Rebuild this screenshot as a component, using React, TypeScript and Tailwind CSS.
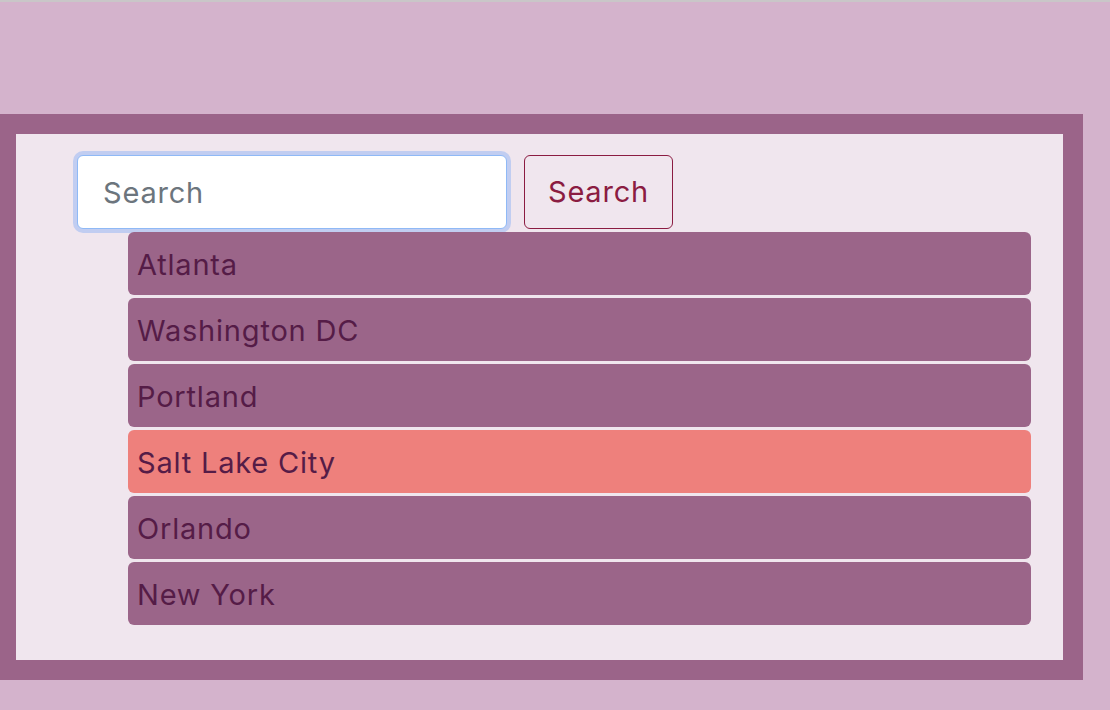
import React from "react";

const cities = ["Atlanta", "Washington DC", "Portland", "Salt Lake City", "Orlando", "New York"];

export default function App() {
    const active = "Salt Lake City";

    return (
        <div
            className="w-[1110px] h-[710px] bg-[#d4b3cc] border-t-2 border-[#c9c6c8] overflow-hidden"
            style={{ fontFamily: "Inter, 'Noto Sans', sans-serif" }}
        >
            <div className="h-[112px]" />
            {/* main box */}
            <div className="w-[1083px] border-[#9b6489] border-l-[16px] border-t-[20px] border-r-[20px] border-b-[20px] bg-[#f0e6ee] pt-[21px] pb-[35px]">
                <div className="flex items-start gap-[17px] pl-[61px]">
                    <input
                        placeholder="Search"
                        className="w-[430px] h-[74px] bg-white rounded-[6px] border border-[#8fb9f6] ring-4 ring-[#c1cdf1] px-[25px] text-[29px] tracking-[0.8px] text-[#212529] placeholder:text-[#6c757d] outline-none"
                    />
                    <button className="w-[149px] h-[74px] rounded-[6px] border border-[#8b1c42] text-[#8b1c42] text-[29px] tracking-[0.8px]">
                        Search
                    </button>
                </div>
                {/* results */}
                <div className="flex flex-col gap-[3px] mt-[3px] ml-[112px] w-[903px]">
                    {cities.map((c) => (
                        <div
                            key={c}
                            className={
                                "h-[63px] rounded-[6px] flex items-center pl-[9px] pt-[2px] text-[29px] tracking-[0.8px] text-[#551c47] " +
                                (c === active ? "bg-[#ee807c]" : "bg-[#9b6589]")
                            }
                        >
                            {c}
                        </div>
                    ))}
                </div>
            </div>
        </div>
    );
}
